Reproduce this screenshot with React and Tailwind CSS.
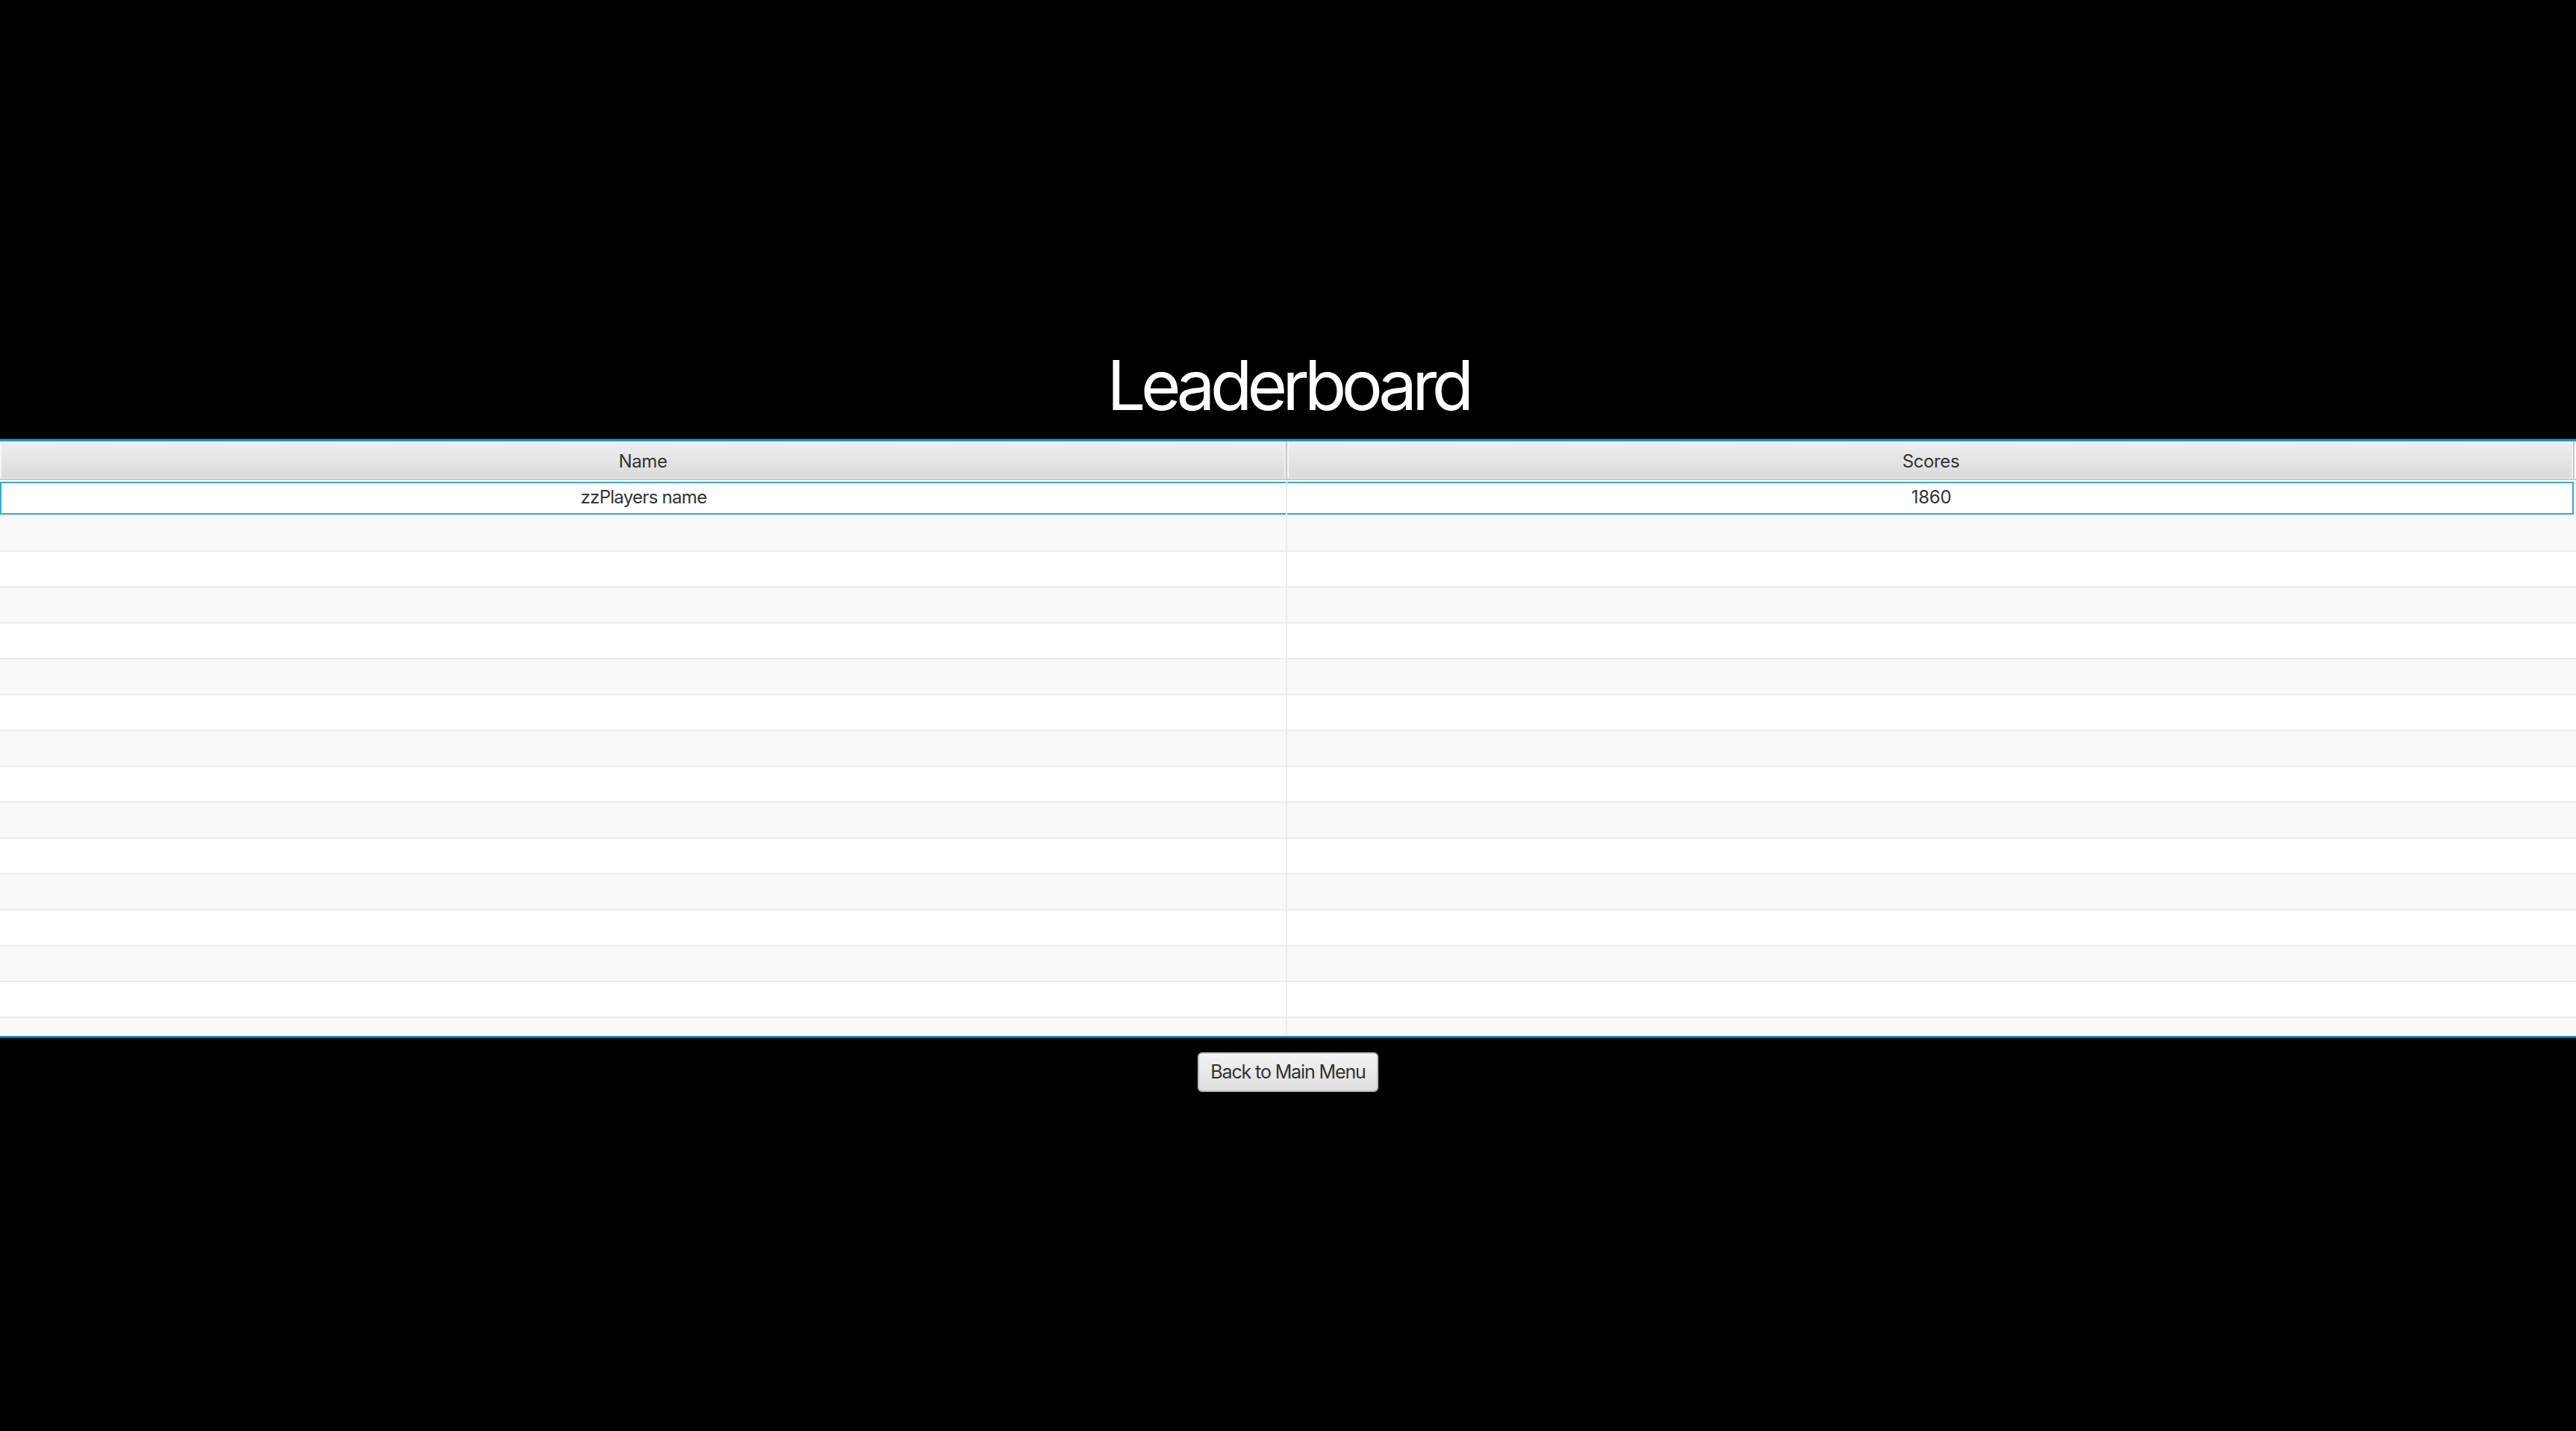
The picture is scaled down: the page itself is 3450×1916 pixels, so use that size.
import React from "react";

function Row({ i, name, score }) {
  const odd = i % 2 === 0;
  if (i === 0) {
    return (
      <div className="flex h-[48px] shrink-0 border-b-2 border-[#f0f0f0] bg-white pt-[2px]">
        <div className="flex w-[1722px] items-center justify-center border-y-2 border-l-2 border-[#31acd7] pb-[2px] text-[24px] tracking-[-0.03em] text-[#333]">
          {name}
        </div>
        <div className="w-[2px] bg-[#ededed]" />
        <div className="mr-[3px] flex flex-1 items-center justify-center border-y-2 border-r-2 border-[#31acd7] pb-[2px] pl-[4px] text-[24px] tracking-[-0.01em] text-[#333]">
          {score}
        </div>
      </div>
    );
  }
  return (
    <div
      className={
        "flex h-[48px] shrink-0 border-b-2 border-[#ededed] " +
        (odd ? "bg-white" : "bg-[#f9f9f9]")
      }
    >
      <div className="w-[1722px]" />
      <div className="w-[2px] bg-[#ededed]" />
      <div className="flex-1" />
    </div>
  );
}

export default function App() {
  const rows = Array.from({ length: 16 }, (_, i) => i);
  return (
    <div className="flex h-[1916px] w-full flex-col items-center bg-black font-[Inter,sans-serif]">
      <h1 className="mt-[470px] mb-[25px] text-[92px] leading-none font-normal tracking-[-0.072em] text-white">
        Leaderboard
      </h1>
      <div className="w-full">
        <div className="h-[1px] bg-[#0b3e50]" />
        <div className="h-[3px] bg-[#049dd2]" />
        <div className="flex h-[52px] border-b-2 border-[#c8c8c8] bg-white">
          <div className="flex w-[1722px] items-center justify-center bg-[linear-gradient(to_bottom,#efefef,#dadada)] pt-[3px] text-[24px] tracking-[-0.015em] text-[#333] shadow-[inset_2px_0_0_#f5f5f5,inset_-2px_0_0_#f0f0f0,inset_0_-2px_0_#e3e3e3]">
            Name
          </div>
          <div className="w-[2px] bg-[#c8c8c8]" />
          <div className="flex flex-1 items-center justify-center bg-[linear-gradient(to_bottom,#efefef,#dadada)] pt-[3px] pl-[2px] text-[24px] tracking-[-0.015em] text-[#333] shadow-[inset_2px_0_0_#f5f5f5,inset_-2px_0_0_#f0f0f0,inset_0_-2px_0_#e3e3e3]">
            Scores
          </div>
          <div className="w-[2px] bg-[#c8c8c8]" />
          <div className="w-[2px] bg-white" />
        </div>
        <div className="flex h-[744px] flex-col overflow-hidden bg-white">
          {rows.map((i) => (
            <Row key={i} i={i} name="zzPlayers name" score="1860" />
          ))}
        </div>
        <div className="h-[2px] bg-[#049dd2]" />
        <div className="h-[1px] bg-[#0b3e50]" />
      </div>
      <button className="mt-[19px] flex h-[53px] w-[242px] items-center justify-center rounded-[6px] border-2 border-[#bdbdbd] bg-[linear-gradient(to_bottom,#f3f3f3,#dedede)] text-[25px] tracking-[-0.045em] whitespace-nowrap text-[#333] shadow-[inset_0_1px_0_#fafafa]">
        Back to Main Menu
      </button>
    </div>
  );
}
